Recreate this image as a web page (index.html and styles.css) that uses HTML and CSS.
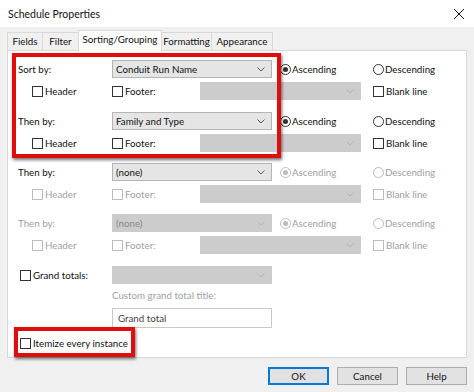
FILE: index.html
```html
<!DOCTYPE html>
<html>
<head>
<meta charset="UTF-8">
<title>Schedule Properties</title>
<link rel="stylesheet" href="styles.css">
</head>
<body>
<div class="dialog">
	<div class="titlebar">
		<span class="title">Schedule Properties</span>
		<svg class="close" width="12" height="12" viewBox="0 0 12 12"><path d="M1 1L11 11M11 1L1 11" stroke="#111" stroke-width="1" fill="none"/></svg>
	</div>

	<div class="tabs">
		<div class="tab w-fields">Fields</div>
		<div class="tab w-filter">Filter</div>
		<div class="tab active w-sort">Sorting/Grouping</div>
		<div class="tab w-format">Formatting</div>
		<div class="tab w-appear">Appearance</div>
	</div>

	<div class="panel">
		<!-- sort by -->
		<div class="row main">
			<span class="label">Sort by:</span>
			<div class="combo"><span>Conduit Run Name</span><svg width="8" height="5" viewBox="0 0 8 5"><path d="M0.5 0.5L4 4L7.5 0.5" stroke="#555" fill="none"/></svg></div>
			<label class="radio asc"><i class="dot on"></i>Ascending</label>
			<label class="radio"><i class="dot"></i>Descending</label>
		</div>
		<div class="row sub">
			<label class="check hdr"><i class="box"></i>Header</label>
			<label class="check ftr"><i class="box"></i>Footer:</label>
			<div class="combo off wide"><span></span><svg width="8" height="5" viewBox="0 0 8 5"><path d="M0.5 0.5L4 4L7.5 0.5" stroke="#b4b4b4" fill="none"/></svg></div>
			<label class="check blank"><i class="box"></i>Blank line</label>
		</div>

		<!-- then by 1 -->
		<div class="row main">
			<span class="label">Then by:</span>
			<div class="combo"><span>Family and Type</span><svg width="8" height="5" viewBox="0 0 8 5"><path d="M0.5 0.5L4 4L7.5 0.5" stroke="#555" fill="none"/></svg></div>
			<label class="radio asc"><i class="dot on"></i>Ascending</label>
			<label class="radio"><i class="dot"></i>Descending</label>
		</div>
		<div class="row sub gap11">
			<label class="check hdr"><i class="box"></i>Header</label>
			<label class="check ftr"><i class="box"></i>Footer:</label>
			<div class="combo off wide"><span></span><svg width="8" height="5" viewBox="0 0 8 5"><path d="M0.5 0.5L4 4L7.5 0.5" stroke="#b4b4b4" fill="none"/></svg></div>
			<label class="check blank"><i class="box"></i>Blank line</label>
		</div>

		<!-- then by 2 -->
		<div class="row main">
			<span class="label">Then by:</span>
			<div class="combo"><span>(none)</span><svg width="8" height="5" viewBox="0 0 8 5"><path d="M0.5 0.5L4 4L7.5 0.5" stroke="#555" fill="none"/></svg></div>
			<label class="radio asc dim"><i class="dot on"></i>Ascending</label>
			<label class="radio dim"><i class="dot"></i>Descending</label>
		</div>
		<div class="row sub gap11 dim">
			<label class="check hdr"><i class="box"></i>Header</label>
			<label class="check ftr"><i class="box"></i>Footer:</label>
			<div class="combo off wide"><span></span><svg width="8" height="5" viewBox="0 0 8 5"><path d="M0.5 0.5L4 4L7.5 0.5" stroke="#b4b4b4" fill="none"/></svg></div>
			<label class="check blank"><i class="box"></i>Blank line</label>
		</div>

		<!-- then by 3 -->
		<div class="row main dim">
			<span class="label">Then by:</span>
			<div class="combo off"><span>(none)</span><svg width="8" height="5" viewBox="0 0 8 5"><path d="M0.5 0.5L4 4L7.5 0.5" stroke="#b4b4b4" fill="none"/></svg></div>
			<label class="radio asc"><i class="dot on"></i>Ascending</label>
			<label class="radio"><i class="dot"></i>Descending</label>
		</div>
		<div class="row sub dim">
			<label class="check hdr"><i class="box"></i>Header</label>
			<label class="check ftr"><i class="box"></i>Footer:</label>
			<div class="combo off wide"><span></span><svg width="8" height="5" viewBox="0 0 8 5"><path d="M0.5 0.5L4 4L7.5 0.5" stroke="#b4b4b4" fill="none"/></svg></div>
			<label class="check blank"><i class="box"></i>Blank line</label>
		</div>

		<!-- grand totals -->
		<div class="row main">
			<label class="check grand"><i class="box"></i>Grand totals:</label>
			<div class="combo off"><span></span><svg width="8" height="5" viewBox="0 0 8 5"><path d="M0.5 0.5L4 4L7.5 0.5" stroke="#b4b4b4" fill="none"/></svg></div>
		</div>
		<div class="custom-label">Custom grand total title:</div>
		<div class="textbox">Grand total</div>
		<div class="row itemize">
			<label class="check"><i class="box"></i>Itemize every instance</label>
		</div>
	</div>

	<div class="buttons">
		<div class="btn default">OK</div>
		<div class="btn">Cancel</div>
		<div class="btn">Help</div>
	</div>

	<div class="mark mark-sort"></div>
	<div class="mark mark-item"></div>
</div>
</body>
</html>
```

FILE: styles.css
```css
html, body{
	margin: 0;
	padding: 0;
}
body{
	width: 474px;
	height: 392px;
	overflow: hidden;
	background: #f0f0f0;
	font-family: Lato, "Noto Sans", "Liberation Sans", sans-serif;
	font-size: 9.75px;
	color: #111;
}
.dialog{
	position: relative;
	width: 474px;
	height: 392px;
}
.titlebar{
	height: 27px;
	background: #fff;
	display: flex;
	align-items: center;
	justify-content: space-between;
	padding: 0 8px 0 8px;
	box-sizing: border-box;
}
.title{
	font-size: 10.5px;
}
.close{
	margin-right: 1px;
}

/* tabs */
.tabs{
	height: 23px;
	padding-left: 7px;
	display: flex;
	align-items: flex-end;
	box-sizing: border-box;
}
.tab{
	height: 18px;
	line-height: 17px;
	box-sizing: border-box;
	border: 1px solid #d9d9d9;
	border-bottom: none;
	margin-right: -1px;
	text-align: center;
	background: #f0f0f0;
}
.tab.active{
	height: 21px;
	line-height: 17px;
	background: #fff;
	margin-bottom: -1px;
	position: relative;
	z-index: 1;
}
.w-fields{ width: 36px; }
.w-filter{ width: 37px; }
.w-sort{ width: 84px; }
.w-format{ width: 51px; }
.w-appear{ width: 62px; }

/* panel */
.panel{
	margin-left: 7px;
	width: 460px;
	height: 308px;
	box-sizing: border-box;
	background: #fff;
	border: 1px solid #d9d9d9;
	padding: 9px 0 0 10px;
}
.row{
	display: flex;
	align-items: center;
	height: 18px;
}
.row.main{
	margin-bottom: 4px;
}
.row.sub{
	margin-bottom: 12px;
}
.row.sub.gap11{
	margin-bottom: 11px;
}
.label{
	width: 94px;
}
.combo{
	width: 160px;
	height: 18px;
	box-sizing: border-box;
	background: #e5e5e5;
	border: 1px solid #b4b4b4;
	display: flex;
	align-items: center;
	justify-content: space-between;
	padding: 0 6px 0 3px;
}
.combo.off{
	background: #cccccc;
	border-color: #cccccc;
	color: #8a8a8a;
}
.combo.wide{
	width: 161px;
}
.radio, .check{
	display: flex;
	align-items: center;
}
.dot{
	width: 11px;
	height: 11px;
	box-sizing: border-box;
	border: 1px solid #333;
	border-radius: 50%;
	margin-right: 1px;
	position: relative;
	background: #fff;
}
.dot.on::after{
	content: "";
	position: absolute;
	left: 2px;
	top: 2px;
	width: 5px;
	height: 5px;
	border-radius: 50%;
	background: #333;
}
.radio.asc{
	margin-left: 8px;
	width: 93px;
}
.box{
	width: 11px;
	height: 11px;
	box-sizing: border-box;
	border: 1px solid #333;
	background: #fff;
	margin-right: 2px;
}
.check.hdr{
	margin-left: 14px;
	width: 80px;
}
.check.ftr{
	width: 88px;
}
.check.blank{
	margin-left: 12px;
}
.check.grand{
	margin-left: 2px;
	width: 92px;
}
.dim, .dim .label{
	color: #a0a0a0;
}
.dim .dot, .dim .box, .radio.dim .dot{
	border-color: #bcbcbc;
}
.dim .dot.on::after{
	background: #bcbcbc;
}
.radio.dim{
	color: #a0a0a0;
}
.custom-label{
	margin: 5px 0 0 94px;
	height: 13px;
	line-height: 13px;
	color: #a0a0a0;
}
.textbox{
	margin: 6px 0 0 94px;
	width: 160px;
	height: 20px;
	box-sizing: border-box;
	border: 1px solid #c8c8c8;
	padding-left: 5px;
	line-height: 18px;
	color: #444;
}
.row.itemize{
	margin-top: 9px;
	height: 12px;
	padding-left: 2px;
}

/* buttons */
.buttons{
	display: flex;
	justify-content: flex-end;
	gap: 8px;
	padding: 9px 7px 0 0;
}
.btn{
	width: 61px;
	height: 18px;
	box-sizing: border-box;
	background: #e1e1e1;
	border: 1px solid #adadad;
	text-align: center;
	line-height: 16px;
}
.btn.default{
	border: 2px solid #0078d7;
	line-height: 14px;
}

/* red highlight boxes */
.mark{
	position: absolute;
	border: 4px solid #e00d0d;
	box-shadow: 1px 2px 3px rgba(0,0,0,0.55);
}
.mark-sort{
	left: 12px;
	top: 53px;
	width: 261px;
	height: 97px;
}
.mark-item{
	left: 14px;
	top: 327px;
	width: 113px;
	height: 22px;
}
```
